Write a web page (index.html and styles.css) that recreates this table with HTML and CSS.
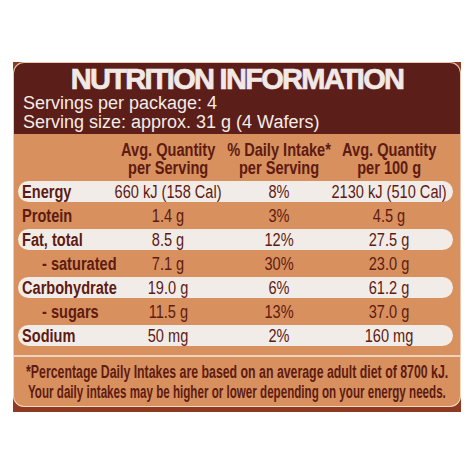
FILE: index.html
```html
<!DOCTYPE html>
<html>
<head>
<meta charset="utf-8">
<link rel="stylesheet" href="styles.css">
</head>
<body>
<div class="panel">
  <div class="head">
    <h1 class="title">NUTRITION INFORMATION</h1>
    <p class="serv">Servings per package: 4</p>
    <p class="serv">Serving size: approx. 31 g (4 Wafers)</p>
  </div>
  <div class="table">
    <div class="row colhead">
      <span></span>
      <span class="c"><span class="n">Avg. Quantity<br>per Serving</span></span>
      <span class="c"><span class="n">% Daily Intake*<br>per Serving</span></span>
      <span class="c"><span class="n">Avg. Quantity<br>per 100 g</span></span>
    </div>
    <div class="row hl"><span class="lab"><span class="n">Energy</span></span><span class="c"><span class="n">660 kJ (158 Cal)</span></span><span class="c"><span class="n">8%</span></span><span class="c"><span class="n">2130 kJ (510 Cal)</span></span></div>
    <div class="row"><span class="lab"><span class="n">Protein</span></span><span class="c"><span class="n">1.4 g</span></span><span class="c"><span class="n">3%</span></span><span class="c"><span class="n">4.5 g</span></span></div>
    <div class="row hl"><span class="lab"><span class="n">Fat, total</span></span><span class="c"><span class="n">8.5 g</span></span><span class="c"><span class="n">12%</span></span><span class="c"><span class="n">27.5 g</span></span></div>
    <div class="row"><span class="lab sub"><span class="n">- saturated</span></span><span class="c"><span class="n">7.1 g</span></span><span class="c"><span class="n">30%</span></span><span class="c"><span class="n">23.0 g</span></span></div>
    <div class="row hl"><span class="lab"><span class="n">Carbohydrate</span></span><span class="c"><span class="n">19.0 g</span></span><span class="c"><span class="n">6%</span></span><span class="c"><span class="n">61.2 g</span></span></div>
    <div class="row"><span class="lab sub"><span class="n">- sugars</span></span><span class="c"><span class="n">11.5 g</span></span><span class="c"><span class="n">13%</span></span><span class="c"><span class="n">37.0 g</span></span></div>
    <div class="row hl"><span class="lab"><span class="n">Sodium</span></span><span class="c"><span class="n">50 mg</span></span><span class="c"><span class="n">2%</span></span><span class="c"><span class="n">160 mg</span></span></div>
  </div>
  <div class="foot">
    <p><span class="fn fn1">*Percentage Daily Intakes are based on an average adult diet of 8700 kJ.</span></p>
    <p><span class="fn fn2">Your daily intakes may be higher or lower depending on your energy needs.</span></p>
  </div>
</div>
</body>
</html>
```

FILE: styles.css
```css
html, body {
  margin: 0;
  padding: 0;
  background: #ffffff;
}

.panel {
  margin: 62px 0 0 13px;
  width: 448px;
  height: 350px;
  background: #8e3a22;
  display: flex;
  flex-direction: column;
  box-sizing: border-box;
}

.head {
  height: 72px;
  box-sizing: border-box;
  background: #5b1e18;
  border: 1px solid #e9c9b4;
  border-bottom: none;
  border-radius: 11px 11px 0 0;
  padding: 1px 0 0 9px;
  color: #f4ece8;
  font-family: "Liberation Sans", Arial, sans-serif;
}

.title {
  margin: 0;
  font-size: 29px;
  line-height: 30px;
  font-weight: 700;
  text-align: center;
  letter-spacing: -1.7px;
  -webkit-text-stroke: 0.7px #f1e9e6;
  padding-right: 9px;
  color: #f1e9e6;
}

.serv {
  margin: 0;
  font-size: 18px;
  line-height: 19px;
}

.table {
  height: 221px;
  box-sizing: border-box;
  background: #d8905e;
  border-left: 1px solid #e9c9b4;
  border-right: 1px solid #e9c9b4;
  padding: 7px 7px 0 4px;
  color: #5e1b12;
  font-family: "Liberation Sans", Arial, sans-serif;
  font-size: 18px;
}

.n {
  display: inline-block;
  transform: scaleX(0.81);
  transform-origin: center top;
  white-space: nowrap;
}

.row {
  display: grid;
  grid-template-columns: 97px 106px 116px 104px;
  box-sizing: border-box;
  height: 21px;
  padding-top: 2px;
  line-height: 19px;
  margin-bottom: 3px;
  white-space: nowrap;
}

.row .c {
  justify-self: center;
  text-align: center;
}

.colhead {
  height: 40px;
  padding-top: 0;
  line-height: 18px;
  font-weight: 700;
  margin-bottom: 0;
}

.hl {
  background: #f2ece9;
  border-radius: 11px;
}

.lab {
  font-weight: 700;
  padding-left: 4px;
}

.lab .n {
  transform-origin: left top;
}

.lab.sub {
  padding-left: 24px;
}

.foot {
  height: 52px;
  box-sizing: border-box;
  background: #d8905e;
  border: 1px solid #f2d9c2;
  border-top: 2px solid #efd2bb;
  border-radius: 0 0 11px 11px;
  padding-top: 5px;
  color: #5e1b12;
  font-family: "Liberation Sans", Arial, sans-serif;
  font-size: 18px;
  font-weight: 700;
  line-height: 20px;
}

.foot p {
  margin: 0;
  display: flex;
  justify-content: center;
}

.fn {
  display: inline-block;
  white-space: nowrap;
  transform-origin: center top;
}

.fn1 {
  transform: scaleX(0.685);
}

.fn2 {
  transform: scaleX(0.645);
}
```
